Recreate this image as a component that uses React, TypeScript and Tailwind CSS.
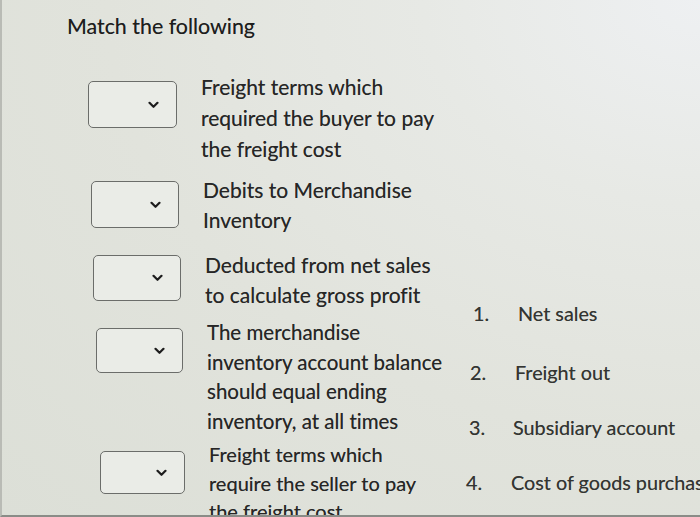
import React from "react";

type Row = {
  lines: string[];
  ml: string;
  mt: string;
  selectW: string;
  selectH: string;
  selectMt: string;
  text: string;
};

const rows: Row[] = [
  {
    lines: ["Freight terms which", "required the buyer to pay", "the freight cost"],
    ml: "ml-[86px]",
    mt: "mt-0",
    selectW: "w-[89px]",
    selectH: "h-[47px]",
    selectMt: "mt-[10px]",
    text: "text-[21px] leading-[31px]",
  },
  {
    lines: ["Debits to Merchandise", "Inventory"],
    ml: "ml-[89px]",
    mt: "mt-[11px]",
    selectW: "w-[88px]",
    selectH: "h-[47px]",
    selectMt: "mt-[6px]",
    text: "text-[21px] leading-[30px]",
  },
  {
    lines: ["Deducted from net sales", "to calculate gross profit"],
    ml: "ml-[91px]",
    mt: "mt-[15px]",
    selectW: "w-[88px]",
    selectH: "h-[46px]",
    selectMt: "mt-[5px]",
    text: "text-[21px] leading-[30px]",
  },
  {
    lines: [
      "The merchandise",
      "inventory account balance",
      "should equal ending",
      "inventory, at all times",
    ],
    ml: "ml-[94px]",
    mt: "mt-[8px]",
    selectW: "w-[87px]",
    selectH: "h-[45px]",
    selectMt: "mt-[10px]",
    text: "text-[20.5px] leading-[29.5px]",
  },
  {
    lines: ["Freight terms which", "require the seller to pay", "the freight cost"],
    ml: "ml-[98px]",
    mt: "mt-[4px]",
    selectW: "w-[85px]",
    selectH: "h-[43px]",
    selectMt: "mt-[11px]",
    text: "text-[20px] leading-[28.5px]",
  },
];

const options = [
  { n: "1.", label: "Net sales", ml: "ml-[11px]", mt: "mt-0", gap: "w-[45px]" },
  { n: "2.", label: "Freight out", ml: "ml-[8px]", mt: "mt-[35px]", gap: "w-[45px]" },
  { n: "3.", label: "Subsidiary account", ml: "ml-[7px]", mt: "mt-[31px]", gap: "w-[44px]" },
  { n: "4.", label: "Cost of goods purchased", ml: "ml-[4px]", mt: "mt-[31px]", gap: "w-[45px]" },
];

function Chevron() {
  return (
    <svg width="11" height="8" viewBox="0 0 11 8" fill="none">
      <path
        d="M1.5 1.8 L5.5 5.8 L9.5 1.8"
        stroke="#1c1c1c"
        strokeWidth="2.2"
        strokeLinecap="round"
        strokeLinejoin="round"
      />
    </svg>
  );
}

function SelectBox({ w, h, mt }: { w: string; h: string; mt: string }) {
  return (
    <div
      className={`${w} ${h} ${mt} shrink-0 rounded-[5px] border-[1.5px] border-[#6b6d6a] bg-[#eaece7] flex items-center justify-end pr-[17px]`}
    >
      <Chevron />
    </div>
  );
}

export default function App() {
  return (
    <div
      className="relative w-[700px] h-[517px] overflow-hidden bg-[radial-gradient(ellipse_at_top_right,#eef0f2_0%,#e7e9e5_28%,#e1e3dc_60%,#dcdfd7_100%)] border-l-[2px] border-l-[#b9bbb5] border-b-[2px] border-b-[#8a8c87] [text-shadow:0_0_0.6px_rgba(0,0,0,0.45)] [font-variant-ligatures:none]"
      style={{ fontFamily: "Lato, 'Open Sans', sans-serif" }}
    >
      <div className="pl-[65px] pt-[10px] text-[21.4px] leading-[32px] text-[#1d1d1d]">
        Match the following
      </div>

      <div className="flex mt-[29px]">
        <div className="w-[460px] shrink-0 flex flex-col">
          {rows.map((r, i) => (
            <div key={i} className={`flex items-start ${r.ml} ${r.mt}`}>
              <SelectBox w={r.selectW} h={r.selectH} mt={r.selectMt} />
              <div className={`ml-[24px] ${r.text} text-[#262626] whitespace-nowrap`}>
                {r.lines.map((l, j) => (
                  <div key={j}>{l}</div>
                ))}
              </div>
            </div>
          ))}
        </div>

        <div className="flex flex-col pt-[230px] text-[19.8px] leading-[24px] text-[#333532]">
          {options.map((o, i) => (
            <div key={i} className={`flex ${o.ml} ${o.mt} whitespace-nowrap`}>
              <span className={`${o.gap} shrink-0`}>{o.n}</span>
              <span>{o.label}</span>
            </div>
          ))}
        </div>
      </div>
    </div>
  );
}
